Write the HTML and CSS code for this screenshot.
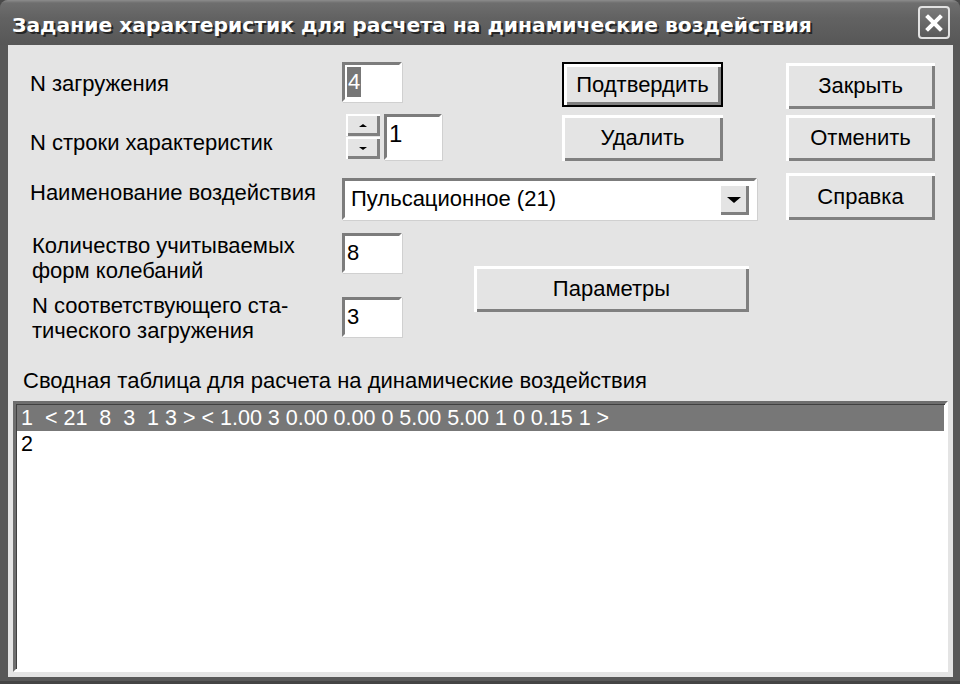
FILE: index.html
```html
<!DOCTYPE html>
<html lang="ru">
<head>
<meta charset="utf-8">
<title>Задание характеристик</title>
<link rel="stylesheet" href="styles.css">
</head>
<body>
<div class="window">
  <div class="titlebar">
    <span class="title">Задание характеристик для расчета на динамические воздействия</span>
    <span class="close"><svg width="18" height="18" viewBox="0 0 18 18"><path d="M3 3 L15 15 M15 3 L3 15" stroke="#fff" stroke-width="4" stroke-linecap="square"/></svg></span>
  </div>
  <div class="client">
    <div class="form">
      <div class="lbl l1">N загружения</div>
      <div class="edit e4"><span class="sel">4</span></div>
      <div class="btn default b-confirm">Подтвердить</div>
      <div class="btn b-closebtn">Закрыть</div>

      <div class="lbl l2">N строки характеристик</div>
      <div class="spin-wrap">
        <div class="spin">
          <div class="spinbtn"><span class="tri-up"></span></div>
          <div class="spinbtn"><span class="tri-down"></span></div>
        </div>
        <div class="edit e1">1</div>
      </div>
      <div class="btn b-delete">Удалить</div>
      <div class="btn b-cancel">Отменить</div>

      <div class="lbl l3">Наименование воздействия</div>
      <div class="combo">
        <span class="combo-text">Пульсационное (21)</span>
        <span class="combo-arrow"><span class="tri-big"></span></span>
      </div>
      <div class="btn b-help">Справка</div>

      <div class="lbl two l4">Количество учитываемых<br>форм колебаний</div>
      <div class="edit e8">8</div>
      <div class="btn b-params">Параметры</div>

      <div class="lbl two l5">N соответствующего ста-<br>тического загружения</div>
      <div class="edit e3">3</div>
    </div>
    <div class="summary">Сводная таблица для расчета на динамические воздействия</div>
    <div class="listbox">
      <div class="row selected">1  &lt; 21  8  3  1 3 &gt; &lt; 1.00 3 0.00 0.00 0 5.00 5.00 1 0 0.15 1 &gt;</div>
      <div class="row">2</div>
    </div>
  </div>
</div>
</body>
</html>
```

FILE: styles.css
```css
* { box-sizing: border-box; }

body {
  margin: 0;
  background: #4a4a4a;
  font-family: "Liberation Sans", Arial, sans-serif;
  color: #000;
}

.window {
  width: 960px;
  height: 684px;
  background: #585858;
  border-radius: 8px 8px 0 0;
  display: flex;
  flex-direction: column;
  overflow: hidden;
  box-shadow: inset 0 -3px 0 #444;
}

.titlebar {
  height: 45px;
  flex: none;
  display: flex;
  align-items: center;
  justify-content: space-between;
  padding: 4px 10px 0 12px;
  background: linear-gradient(#8c8c8c 0, #6e6e6e 3px, #626262 40%, #575757 100%);
}

.title {
  font-family: "DejaVu Sans", sans-serif;
  font-weight: bold;
  font-size: 20.3px;
  color: #fff;
  text-shadow: 2px 2px 0 #262626;
  white-space: nowrap;
}

.close {
  width: 32px;
  height: 33px;
  margin-top: -4px;
  border: 2px solid #e2e2e2;
  border-radius: 4px;
  background: linear-gradient(#7a7a7a, #5a5a5a);
  display: flex;
  align-items: center;
  justify-content: center;
}

.client {
  flex: 1;
  margin: 0 7px 7px 8px;
  background: #e4e4e4;
  display: flex;
  flex-direction: column;
}

.form {
  display: grid;
  grid-template-columns: 334px 132px 88px 161px 34px 29px 149px;
  grid-template-rows: 66px 57px 56px 66px 60px;
  font-size: 22px;
  align-items: start;
}

.lbl {
  grid-column: 1;
  padding-left: 22px;
  line-height: 25px;
  white-space: nowrap;
}
.lbl.two { padding-left: 24px; }
.l1 { grid-row: 1; margin-top: 26px; }
.l2 { grid-row: 2; margin-top: 19px; }
.l3 { grid-row: 3; margin-top: 12px; }
.l4 { grid-row: 4; margin-top: 9px; }
.l5 { grid-row: 5; margin-top: 3px; }

.edit {
  background: #fff;
  border-style: solid;
  border-width: 3px;
  border-color: #7c7c7c #fff #fff #7c7c7c;
  box-shadow: 1px 1px 0 #d0d0d0;
  display: flex;
  align-items: center;
  padding-left: 2px;
  font-size: 22px;
  width: 60px;
  height: 40px;
  grid-column: 2;
}
.e4 { grid-row: 1; margin-top: 17px; }
.e8 { grid-row: 4; margin-top: 9px; }
.e3 { grid-row: 5; margin-top: 7px; }

.sel {
  background: #777;
  color: #fff;
  padding: 0 1px;
  line-height: 30px;
}

.spin-wrap {
  grid-column: 2;
  grid-row: 2;
  margin-top: 3px;
  display: flex;
  gap: 4px;
  padding-left: 4px;
}
.spin {
  display: flex;
  flex-direction: column;
  gap: 1px;
}
.spinbtn {
  width: 34px;
  height: 22px;
  background: #e4e4e4;
  box-shadow: inset 2px 2px #fff, inset -3px -3px #808080;
  display: flex;
  align-items: center;
  justify-content: center;
}
.tri-up {
  width: 0; height: 0;
  border-left: 4px solid transparent;
  border-right: 4px solid transparent;
  border-bottom: 3px solid #000;
}
.tri-down {
  width: 0; height: 0;
  border-left: 4px solid transparent;
  border-right: 4px solid transparent;
  border-top: 3px solid #000;
}
.e1 {
  width: 58px;
  height: 46px;
  align-items: flex-start;
  padding-top: 3px;
  font-size: 24px;
}

.btn {
  background: #e4e4e4;
  box-shadow: inset 3px 3px #fff, inset -3px -3px #808080;
  display: flex;
  align-items: center;
  justify-content: center;
  font-size: 22px;
  white-space: nowrap;
}
.btn.default {
  border: 2px solid #000;
}
.b-confirm { grid-column: 4; grid-row: 1; margin-top: 17px; height: 45px; }
.b-closebtn { grid-column: 7; grid-row: 1; margin-top: 18px; height: 46px; }
.b-delete { grid-column: 4; grid-row: 2; margin-top: 4px; height: 46px; }
.b-cancel { grid-column: 7; grid-row: 2; margin-top: 4px; height: 46px; }
.b-help { grid-column: 7; grid-row: 3; margin-top: 5px; height: 47px; }
.b-params {
  grid-column: 3 / span 3;
  grid-row: 4 / span 2;
  margin-top: 42px;
  width: 275px;
  height: 46px;
}

.combo {
  grid-column: 2 / span 4;
  grid-row: 3;
  margin-top: 10px;
  height: 42px;
  background: #fff;
  border-style: solid;
  border-width: 3px;
  border-color: #7c7c7c #fff #fff #7c7c7c;
  box-shadow: 1px 1px 0 #d0d0d0;
  display: flex;
  align-items: center;
  justify-content: space-between;
  padding: 0 5px 0 6px;
  font-size: 22px;
}
.combo-arrow {
  width: 30px;
  height: 31px;
  background: #e4e4e4;
  box-shadow: inset 2px 2px #fff, inset -3px -3px #808080;
  display: flex;
  align-items: center;
  justify-content: center;
}
.tri-big {
  width: 0; height: 0;
  border-left: 7px solid transparent;
  border-right: 7px solid transparent;
  border-top: 6px solid #000;
  margin-top: 2px;
}

.summary {
  margin-top: 18px;
  padding-left: 15px;
  font-size: 22px;
  line-height: 25px;
  white-space: nowrap;
}

.listbox {
  margin: 8px 5px 0 5px;
  height: 271px;
  background: #fff;
  border-style: solid;
  border-width: 3px;
  border-color: #6e6e6e #fff #fff #6e6e6e;
  box-shadow: inset 1px 1px 0 #404040, 0 0 0 1px #e4e4e4;
  padding: 1px 1px 0 1px;
}
.row {
  height: 26px;
  line-height: 26px;
  padding-left: 4px;
  font-size: 21.5px;
  white-space: pre;
}
.row.selected {
  background: #777;
  color: #fff;
}
```
